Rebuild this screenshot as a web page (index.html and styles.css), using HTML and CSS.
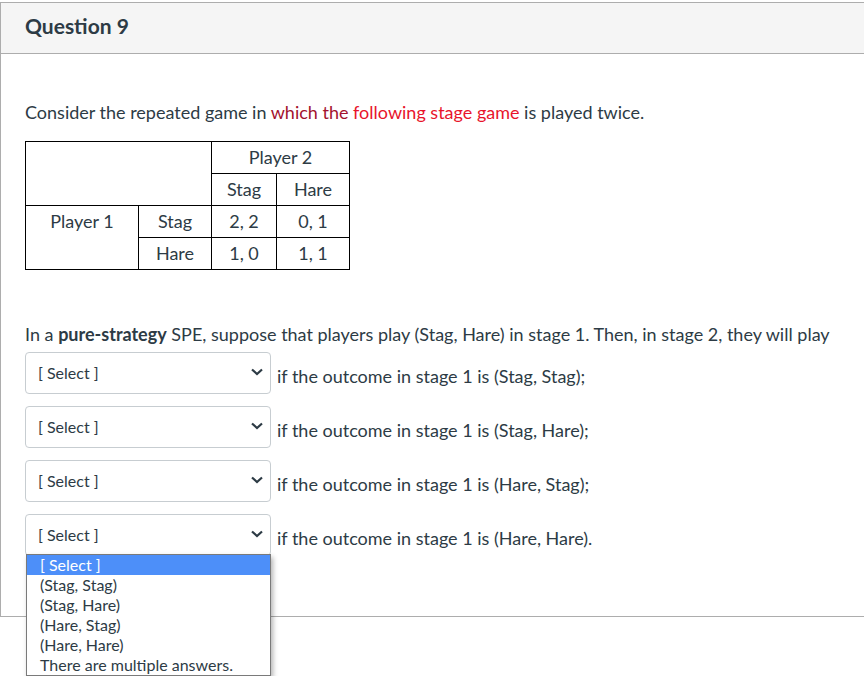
FILE: index.html
```html
<!DOCTYPE html>
<html lang="en">
<head>
    <meta charset="UTF-8">
    <meta name="viewport" content="width=device-width, initial-scale=1.0">
    <title>Question 9</title>
    <link rel="stylesheet" href="styles.css">
</head>
<body>
    <div class="question">
        <div class="question-header">
            <h2>Question 9</h2>
        </div>

        <div class="question-body">
            <p class="intro">Consider the repeated game in <span class="red-dark">which the</span> <span class="red">following stage game</span> is played twice.</p>

            <table class="payoff">
                <colgroup>
                    <col class="c1"><col class="c2"><col class="c3"><col class="c4">
                </colgroup>
                <tr>
                    <td rowspan="2" colspan="2"></td>
                    <td colspan="2">Player 2</td>
                </tr>
                <tr>
                    <td>Stag</td>
                    <td>Hare</td>
                </tr>
                <tr>
                    <td rowspan="2">Player 1</td>
                    <td>Stag</td>
                    <td>2, 2</td>
                    <td>0, 1</td>
                </tr>
                <tr>
                    <td>Hare</td>
                    <td>1, 0</td>
                    <td>1, 1</td>
                </tr>
            </table>

            <p class="lead">In a <strong>pure-strategy</strong> SPE, suppose that players play (Stag, Hare) in stage 1. Then, in stage 2, they will play</p>

            <!-- 下拉选择 -->
            <div class="answer-row">
                <div class="select">
                    <span>[ Select ]</span>
                    <svg width="12" height="8" viewBox="0 0 12 8"><path d="M1 1.5 L6 6 L11 1.5" fill="none" stroke="#2d3b45" stroke-width="2.2"/></svg>
                </div>
                <span class="answer-text">if the outcome in stage 1 is (Stag, Stag);</span>
            </div>

            <div class="answer-row">
                <div class="select">
                    <span>[ Select ]</span>
                    <svg width="12" height="8" viewBox="0 0 12 8"><path d="M1 1.5 L6 6 L11 1.5" fill="none" stroke="#2d3b45" stroke-width="2.2"/></svg>
                </div>
                <span class="answer-text">if the outcome in stage 1 is (Stag, Hare);</span>
            </div>

            <div class="answer-row">
                <div class="select">
                    <span>[ Select ]</span>
                    <svg width="12" height="8" viewBox="0 0 12 8"><path d="M1 1.5 L6 6 L11 1.5" fill="none" stroke="#2d3b45" stroke-width="2.2"/></svg>
                </div>
                <span class="answer-text">if the outcome in stage 1 is (Hare, Stag);</span>
            </div>

            <div class="answer-row">
                <div class="select open">
                    <span>[ Select ]</span>
                    <svg width="12" height="8" viewBox="0 0 12 8"><path d="M1 1.5 L6 6 L11 1.5" fill="none" stroke="#2d3b45" stroke-width="2.2"/></svg>
                    <ul class="options">
                        <li class="active">[ Select ]</li>
                        <li>(Stag, Stag)</li>
                        <li>(Stag, Hare)</li>
                        <li>(Hare, Stag)</li>
                        <li>(Hare, Hare)</li>
                        <li>There are multiple answers.</li>
                    </ul>
                </div>
                <span class="answer-text">if the outcome in stage 1 is (Hare, Hare).</span>
            </div>
        </div>
    </div>
</body>
</html>
```

FILE: styles.css
```css
body {
    margin: 0;
    padding-bottom: 59px;
    font-family: Lato, "Liberation Sans", sans-serif;
    color: #2d3b45;
    background: white;
}

.question {
    margin-top: 2px;
    border: 1px solid #adadad;
    border-right: none;
}

.question-header {
    background: #f5f5f5;
    border-bottom: 1px solid #adadad;
    padding: 11px 24px 15px;
}

h2 {
    margin: 0;
    font-size: 21px;
    line-height: 24px;
    font-weight: bold;
}

.question-body {
    padding: 45px 24px 60px;
    font-size: 18px;
    line-height: 27px;
}

p {
    margin: 0;
}

.red-dark {
    color: #a3122e;
}

.red {
    color: #e8142c;
}

.payoff {
    margin-top: 15px;
    border-collapse: collapse;
    table-layout: fixed;
    width: 324px;
    font-size: 18px;
}

.c1 { width: 113px; }
.c2 { width: 73px; }
.c3 { width: 65px; }
.c4 { width: 73px; }

.payoff td {
    border: 1px solid #000;
    height: 31px;
    padding: 0 4px;
    text-align: center;
    line-height: 30px;
    vertical-align: top;
}

.lead {
    margin-top: 51px;
    margin-bottom: 4px;
}

.answer-row {
    display: flex;
    align-items: flex-start;
    gap: 6px;
    margin-bottom: 12px;
}

.answer-row:last-child {
    margin-bottom: 0;
}

.select {
    position: relative;
    box-sizing: border-box;
    width: 246px;
    height: 42px;
    border: 1px solid #c7cdd1;
    border-radius: 4px;
    padding: 0 7px 2px 12px;
    display: flex;
    align-items: center;
    justify-content: space-between;
    font-size: 16px;
    background: white;
}

.answer-text {
    padding-top: 11px;
}

.options {
    position: absolute;
    top: 39px;
    left: 0;
    width: 245px;
    box-sizing: border-box;
    margin: 0;
    padding: 0;
    list-style: none;
    background: white;
    border: 1px solid #7a7a7a;
    box-shadow: 2px 3px 5px rgba(0,0,0,0.3);
    font-size: 16px;
    line-height: 20px;
    z-index: 2;
}

.options li {
    padding-left: 13px;
}

.options li.active {
    background: #4d8ff9;
    color: white;
}
```
